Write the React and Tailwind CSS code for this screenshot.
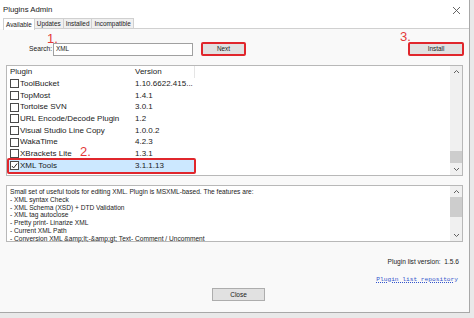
import React from "react";

const rows = [
  ["ToolBucket", "1.10.6622.415..."],
  ["TopMost", "1.4.1"],
  ["Tortoise SVN", "3.0.1"],
  ["URL Encode/Decode Plugin", "1.2"],
  ["Visual Studio Line Copy", "1.0.0.2"],
  ["WakaTime", "4.2.3"],
  ["XBrackets Lite", "1.3.1"],
];

const desc = [
  "Small set of useful tools for editing XML. Plugin is MSXML-based. The features are:",
  "- XML syntax Check",
  "- XML Schema (XSD) + DTD Validation",
  "- XML tag autoclose",
  "- Pretty print- Linarize XML",
  "- Current XML Path",
  "- Conversion XML &amp;lt;-&amp;gt; Text- Comment / Uncomment",
];

function Chevron({ up }) {
  return (
    <svg width="7" height="5" viewBox="0 0 7 5">
      <path
        d={up ? "M1 4 L3.5 1.5 L6 4" : "M1 1 L3.5 3.5 L6 1"}
        fill="none"
        stroke="#606060"
        strokeWidth="1"
      />
    </svg>
  );
}

function Scrollbar({ thumbTop, thumbH }) {
  return (
    <div className="relative w-[12px] h-full bg-[#f0f0f0] flex flex-col items-center justify-between py-[3px]">
      <Chevron up />
      <div
        className="absolute left-0 right-0 bg-[#cdcdcd]"
        style={{ top: thumbTop, height: thumbH }}
      />
      <Chevron />
    </div>
  );
}

function Box({ checked }) {
  return (
    <div className="w-[9px] h-[9px] border border-[#4a4a4a] bg-white flex items-center justify-center shrink-0">
      {checked && (
        <svg width="8" height="8" viewBox="0 0 8 8">
          <path d="M1 4 L3 6.2 L7 1.2" fill="none" stroke="#222" strokeWidth="1.1" />
        </svg>
      )}
    </div>
  );
}

export default function App() {
  return (
    <div
      className="w-[474px] h-[318px] bg-[#e9e9e9] relative overflow-hidden"
      style={{ fontFamily: '"Liberation Sans", Arial, sans-serif' }}
    >
      <div className="w-[470px] h-[313px] bg-[#f9f9f9] border-r border-b border-[#a8a8a8] flex flex-col text-[#1a1a1a]">
        {/* Title bar */}
        <div className="h-[17px] bg-white flex items-center justify-between pl-[3px] pr-[8px]">
          <span className="text-[7.8px] mt-[3px]">Plugins Admin</span>
          <svg width="9" height="9" viewBox="0 0 9 9" className="mt-[3px]">
            <path d="M1 1 L8 8 M8 1 L1 8" stroke="#555" strokeWidth="0.9" />
          </svg>
        </div>
        {/* Tabs */}
        <div className="h-[12px] bg-white flex items-end pl-[3px] text-[6.4px]">
          <div className="h-[12px] px-[2px] flex items-center bg-white border border-b-0 border-[#d0d0d0] relative top-[1px]">
            Available
          </div>
          <div className="h-[11px] px-[2px] flex items-center bg-[#f0f0f0] border border-l-0 border-[#d0d0d0]">
            Updates
          </div>
          <div className="h-[11px] px-[2px] flex items-center bg-[#f0f0f0] border border-l-0 border-[#d0d0d0]">
            Installed
          </div>
          <div className="h-[11px] px-[2px] flex items-center bg-[#f0f0f0] border border-l-0 border-[#d0d0d0]">
            Incompatible
          </div>
          <div className="flex-1 h-[1px] bg-[#d0d0d0]" />
        </div>

        {/* Panel */}
        <div className="flex-1 flex flex-col px-[6px] bg-[#f9f9f9]">
          {/* Search row */}
          <div className="h-[14px] mt-[13px] flex items-center relative">
            <span className="absolute left-[41px] top-[-10px] text-[13px] leading-none text-[#e33a3a]">1.</span>
            <span className="absolute left-[394px] top-[-12px] text-[13px] leading-none text-[#e33a3a]">3.</span>
            <span className="text-[6.7px] ml-[23px] w-[24px]">Search:</span>
            <div className="w-[140px] h-[13px] bg-white border border-[#a0a0a0] flex items-center pl-[2px] text-[6.4px]">
              XML
            </div>
            <div className="ml-[8px] w-[45px] h-[14px] bg-[#e1e1e1] border-2 border-[#e0262c] rounded-[2px] flex items-center justify-center text-[6.4px]">
              Next
            </div>
            <div className="ml-auto mr-[-1px] w-[56px] h-[14px] bg-[#e1e1e1] border-2 border-[#e0262c] rounded-[2px] flex items-center justify-center text-[6.4px]">
              Install
            </div>
          </div>

          {/* List */}
          <div className="mt-[9px] h-[111px] bg-white border border-[#b8b8b8] flex">
            <div className="flex-1 flex flex-col text-[8px] relative">
              <div className="h-[12px] flex items-center">
                <span className="w-[128px] pl-[3px]">Plugin</span>
                <span className="w-[60px] border-r border-[#e5e5e5] h-full flex items-center">Version</span>
              </div>
              {rows.map(([n, v]) => (
                <div key={n} className="h-[11.7px] flex items-center">
                  <div className="w-[128px] flex items-center pl-[3px] gap-[1px]">
                    <Box />
                    <span>{n}</span>
                  </div>
                  <span>{v}</span>
                </div>
              ))}
              <div className="h-[11.7px] flex items-center relative ml-[1px] w-[187px] bg-[#cce8ff]">
                <div className="w-[127px] flex items-center pl-[2px] gap-[1px]">
                  <Box checked />
                  <span>XML Tools</span>
                </div>
                <span>3.1.1.13</span>
                <div className="absolute left-[-1px] top-[-2px] right-[-1px] bottom-[-2px] border-2 border-[#e0262c] rounded-[2px]" />
              </div>
              <span className="absolute left-[73px] top-[79px] text-[13px] leading-none text-[#e33a3a]">2.</span>
            </div>
            <Scrollbar thumbTop={85} thumbH={12} />
          </div>

          {/* Description */}
          <div className="mt-[9px] h-[57px] bg-white border border-[#b8b8b8] flex">
            <div className="flex-1 pl-[3px] pt-[2px] text-[6.6px] leading-[7.75px] text-[#222]">
              {desc.map((d) => (
                <div key={d} className="whitespace-nowrap">{d}</div>
              ))}
            </div>
            <Scrollbar thumbTop={11} thumbH={20} />
          </div>

          {/* Footer */}
          <div className="mt-[15px] flex justify-end pr-[4px] text-[6.6px] text-[#222]">
            Plugin list version:&nbsp;&nbsp;1.5.6
          </div>
          <div className="mt-[8px] flex justify-end pr-[5px]">
            <span
              className="text-[6.2px] text-[#3355cc] underline decoration-dotted"
              style={{ fontFamily: '"Liberation Mono", monospace' }}
            >
              Plugin list repository
            </span>
          </div>
          <div className="mt-[4px] ml-[206px] w-[53px] h-[13px] bg-[#e1e1e1] border border-[#adadad] flex items-center justify-center text-[6.5px]">
            Close
          </div>
        </div>
      </div>
    </div>
  );
}
